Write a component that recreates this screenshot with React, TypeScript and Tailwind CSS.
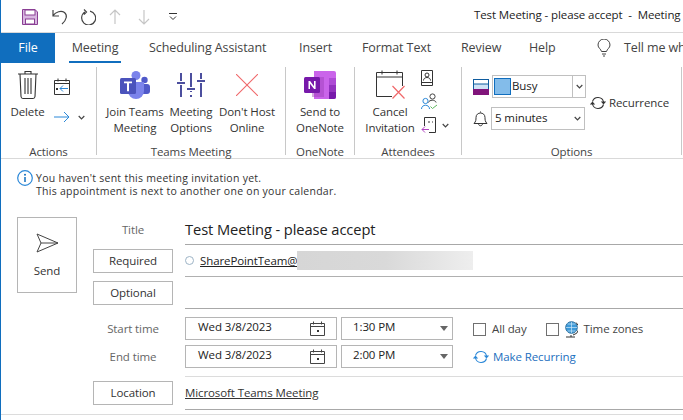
import React from "react";

const Chevron = ({ className = "" }: { className?: string }) => (
  <svg width="7" height="5" viewBox="0 0 7 5" className={className} fill="none" stroke="#444" strokeWidth="1.2"><path d="M.7 1l2.8 2.8L6.3 1" /></svg>
);

const Save = () => (
  <svg width="16" height="16" viewBox="0 0 16 16" fill="none">
    <path d="M.5.5h12.5l2.5 2.5v12.5H.5z" fill="#d8b6e0" stroke="#8a3f94" />
    <rect x="3" y="1" width="10" height="5" fill="#fff" stroke="#8a3f94" />
    <rect x="3.5" y="10" width="9" height="5" fill="#fff" stroke="#8a3f94" />
  </svg>
);

const Trash = () => (
  <svg width="22" height="30" viewBox="0 0 22 30" fill="none" stroke="#333" strokeWidth="1.1">
    <path d="M1 4h20M8 4V1.500h6V4M3 4l1 22.500q.2 2 2 2h10q1.800 0 2-2L19 4M8 8v16M11 8v16M14 8v16" />
  </svg>
);

const CalBack = () => (
  <svg width="16" height="17" viewBox="0 0 16 17" fill="none" stroke="#333">
    <path d="M.5 2.500h15v14H.5zM.5 5.500h15M4 .5v3M12 .5v3" />
    <path d="M14 10.500H6M9 7.500l-3 3 3 3" stroke="#2b88d8" />
    <rect x="2" y="10" width="2" height="2" fill="#333" stroke="none" />
  </svg>
);

const Teams = () => (
  <svg width="30" height="28" viewBox="0 0 30 28">
    <circle cx="24.500" cy="9" r="3.200" fill="#5059c9" />
    <rect x="20" y="13" width="10" height="10" rx="3" fill="#5059c9" />
    <circle cx="16" cy="4.500" r="4.500" fill="#7b83eb" />
    <path d="M8 11h16v9a8 8 0 0 1-16 0z" fill="#7b83eb" />
    <rect x="0" y="7" width="16" height="16" rx="1.500" fill="#4b53bc" />
    <path d="M4 10.500h8v1.800H9v8H7v-8H4z" fill="#fff" />
  </svg>
);

const Sliders = () => (
  <svg width="28" height="24" viewBox="0 0 28 24" fill="none" stroke="#4c4f9e" strokeWidth="2">
    <path d="M4 0v8M4 12v12M14 0v14M14 18v1M14 22v2M24 0v6M24 10v14" />
    <path d="M0 10h8M10 16h8M20 8h8" />
  </svg>
);

const RedX = ({ s = 22 }: { s?: number }) => (
  <svg width={s} height={s} viewBox="0 0 22 22" stroke="#f0686a" strokeWidth="1.100"><path d="M0 0l22 22M22 0L0 22" /></svg>
);

const OneNote = () => (
  <svg width="32" height="28" viewBox="0 0 32 28">
    <path d="M10 0h20a2 2 0 0 1 2 2v24a2 2 0 0 1-2 2H10z" fill="#ca64ea" />
    <rect x="25" y="7" width="7" height="7" fill="#ae4bd5" />
    <rect x="25" y="14" width="7" height="7" fill="#9332bf" />
    <path d="M25 21h7v5a2 2 0 0 1-2 2h-5z" fill="#7719aa" />
    <rect x="8" y="6" width="12" height="20" fill="#9b3cb9" opacity=".45" />
    <rect x="0" y="6" width="16" height="16" rx="1.500" fill="#7719aa" />
    <path d="M4.500 18V10h1.600l3.900 5.200V10h1.600v8h-1.500L6 12.700V18z" fill="#fff" />
  </svg>
);

const CancelInv = () => (
  <svg width="30" height="30" viewBox="0 0 30 30" fill="none">
    <path d="M17 26.500H1.500V2.500h26V16M1.500 7h26M7 .5v4M22 .5v4" stroke="#333" />
    <path d="M17.500 16l12 12.500M29.500 16l-12 12.500" stroke="#f0686a" strokeWidth="1.200" />
  </svg>
);

const Card = () => (
  <svg width="12" height="16" viewBox="0 0 12 16" fill="none" stroke="#333">
    <path d="M.5.5h11v15H.5zM.5 12.500h11" />
    <circle cx="6" cy="5" r="2" />
    <path d="M2.500 10.500c0-4 7-4 7 0" />
  </svg>
);

const People = () => (
  <svg width="17" height="17" viewBox="0 0 17 17" fill="none">
    <circle cx="11.500" cy="3.500" r="2.600" stroke="#444" />
    <path d="M7.500 9.500c.6-3 7-3 7.600 0" stroke="#444" />
    <circle cx="4.500" cy="8" r="2.600" stroke="#2b88d8" />
    <path d="M.5 16c0-5 8-5 8 0" stroke="#2b88d8" />
    <path d="M9.500 13.500l2 2 4.500-3.500" stroke="#5fb75f" />
  </svg>
);

const Forward = () => (
  <svg width="16" height="16" viewBox="0 0 16 16" fill="none">
    <path d="M3.500 9V.5h11v15H8" stroke="#333" />
    <path d="M7 5h2M11 5h1" stroke="#333" />
    <path d="M8 12.500H1M4 9.500l-3 3 3 3" stroke="#b146c2" />
  </svg>
);

const BusyIcon = () => (
  <svg width="16" height="16" viewBox="0 0 16 16" fill="none">
    <rect x=".5" y=".5" width="15" height="15" fill="#fff" stroke="#0f5c9e" />
    <rect x="1" y="5" width="14" height="5" fill="#cfe2f5" />
    <path d="M.5 5h15" stroke="#0f5c9e" />
    <rect x="0" y="10" width="16" height="6" fill="#80147a" />
  </svg>
);

const Bell = () => (
  <svg width="15" height="16" viewBox="0 0 15 16" fill="none" stroke="#333">
    <path d="M1 12.500h13c-2-2-2-4-2-6 0-6-9-6-9 0 0 2 0 4-2 6zM5.500 12.500c0 3 4 3 4 0" />
    <path d="M7.500 .5v1" />
  </svg>
);

const Recur = ({ c = "#333", w = 16 }: { c?: string; w?: number }) => (
  <svg width={w} height={w} viewBox="0 0 16 16" fill="none" stroke={c} strokeWidth="1.100">
    <path d="M2.500 6.500a5.700 5.700 0 0 1 11 .5M13.500 9.500a5.700 5.700 0 0 1-11-.5" />
    <path d="M10.800 6.500h5.400l-2.700 3zM-.2 9.500h5.400l-2.700-3z" fill={c} stroke="none" />
  </svg>
);

const CalSmall = () => (
  <svg width="15" height="15" viewBox="0 0 15 15" fill="none" stroke="#444">
    <path d="M.5 2.500h14v12H.5zM.5 5.500h14M3.500.5v3M11.500.5v3" />
    <rect x="7" y="9" width="2" height="2" fill="#333" stroke="none" />
  </svg>
);

const Globe = () => (
  <svg width="13" height="17" viewBox="0 0 13 17" fill="none">
    <circle cx="6.500" cy="6.500" r="5.800" fill="#3d9ad9" stroke="#2a6e9e" />
    <path d="M1 6.500h11M6.500 1v11M2.500 3h8M2.500 10h8" stroke="#cde6f7" strokeWidth=".7" />
    <path d="M11 1.500a7 7 0 0 1-3 12.500M1 16h9M6 14v2" stroke="#333" />
  </svg>
);

const Tab = ({ children, className = "" }: { children: React.ReactNode; className?: string }) => (
  <span className={`shrink-0 text-[12.5px] text-[#444] ${className}`}>{children}</span>
);

const BigBtn = ({ icon, l1, l2, w }: { icon: React.ReactNode; l1: string; l2?: string; w: string }) => (
  <div className={`flex flex-col items-center ${w}`}>
    <div className="h-[36px] flex items-center justify-center mb-[1px]">{icon}</div>
    <span className="h-[16px] leading-[16px] whitespace-nowrap">{l1}</span>
    {l2 && <span className="h-[16px] leading-[16px] whitespace-nowrap">{l2}</span>}
  </div>
);

const Group = ({ w, label, children }: { w: string; label: string; children: React.ReactNode }) => (
  <div className={`${w} shrink-0 h-[88px] flex flex-col border-r border-[#c8c8c8]`}>
    <div className="h-[78px] flex">{children}</div>
    <div className="text-center leading-[14px] h-[10px] whitespace-nowrap text-[#444]">{label}</div>
  </div>
);

const FormBtn = ({ children }: { children: React.ReactNode }) => (
  <div className="w-[80px] h-[24px] border border-[#b5b5b5] text-center leading-[21px] text-[#333]">{children}</div>
);

const Rule = ({ className = "" }: { className?: string }) => <div className={`h-px ${className}`} />;

const Check = () => <div className="w-[13px] h-[13px] border border-[#707070]" />;

const DateTime = ({ time }: { time: string }) => (
  <div className="flex gap-[4px]">
    <div className="w-[152px] h-[23px] border border-[#b5b5b5] flex items-center justify-between pl-[12px] pr-[11px] text-[#222]">
      <span className="-mt-[3px]">Wed 3/8/2023</span>
      <CalSmall />
    </div>
    <div className="w-[112px] h-[23px] border border-[#b5b5b5] flex items-center justify-between pl-[11px] pr-[3px] text-[#222]">
      <span className="-mt-[3px]">{time}</span>
      <span className="w-0 h-0 border-l-[4px] border-r-[4px] border-t-[5px] border-l-transparent border-r-transparent border-t-[#666] mr-[1px]" />
    </div>
  </div>
);

export default function App() {
  return (
    <div className="w-[683px] h-[420px] overflow-hidden bg-white border-l border-[#106ebe] text-[11.5px] text-[#333] font-['Open_Sans',sans-serif] tracking-[-0.1px]">
      {/* Quick access + title */}
      <div className="h-[33px] border-b border-[#d9d9d9] flex items-center">
        <div className="flex items-center ml-[21px] w-[440px] pt-[2px]">
          <Save />
          <svg className="ml-[14px]" width="16" height="16" viewBox="0 0 16 16" fill="none" stroke="#444" strokeWidth="1.200"><path d="M1 1v6h6M1 6.500C4 3 9 1 12.500 3.500c3 2.500 2.500 7-2.500 11.500" /></svg>
          <svg className="ml-[12px]" width="16" height="16" viewBox="0 0 16 16" fill="none" stroke="#444" strokeWidth="1.200"><path d="M5 3a7 7 0 1 0 5-.9M4 .5L6.500 3 4 5.500" /></svg>
          <svg className="ml-[13px]" width="12" height="16" viewBox="0 0 12 16" fill="none" stroke="#c6c6c6" strokeWidth="1.200"><path d="M6 15V1M1 6l5-5 5 5" /></svg>
          <svg className="ml-[17px]" width="12" height="16" viewBox="0 0 12 16" fill="none" stroke="#c6c6c6" strokeWidth="1.200"><path d="M6 1v14M1 10l5 5 5-5" /></svg>
          <svg className="ml-[19px]" width="8" height="8" viewBox="0 0 8 8" fill="none" stroke="#333"><path d="M0 .5h8M1 3.500l3 3 3-3" /></svg>
        </div>
        <span className="ml-[12px] whitespace-pre text-[#222] -translate-y-px">Test Meeting - please accept  -  Meeting</span>
      </div>
      {/* Tabs */}
      <div className="h-[30px] flex items-center whitespace-nowrap">
        <div className="w-[54px] h-[30px] shrink-0 bg-[#106ebe] text-white text-center text-[12.5px] leading-[29px]">File</div>
        <div className="ml-[14px] w-[52px] h-[30px] shrink-0 border-b-[2px] border-[#106ebe] text-center leading-[29px]">
          <Tab className="text-[#333]">Meeting</Tab>
        </div>
        <Tab className="ml-[28px] w-[150px]">Scheduling Assistant</Tab>
        <Tab className="w-[63px]">Insert</Tab>
        <Tab className="w-[99px]">Format Text</Tab>
        <Tab className="w-[68px]">Review</Tab>
        <Tab className="w-[68px]">Help</Tab>
        <svg className="shrink-0" width="14" height="18" viewBox="0 0 14 18" fill="none" stroke="#444"><path d="M4.500 12.500C4 10 1 9 1 6a6 6 0 0 1 12 0c0 3-3 4-3.500 6.500zM5 15h4M6 17h2" /></svg>
        <Tab className="ml-[13px]">Tell me what</Tab>
      </div>
      {/* Ribbon */}
      <div className="h-[96px] border-b border-[#d9d9d9] pt-[4px] flex">
        <Group w="w-[96px]" label="Actions">
          <div className="w-[53px] flex flex-col items-center">
            <div className="h-[36px] flex items-center mb-[1px] pl-[1px]"><Trash /></div>
            <span className="leading-[16px]">Delete</span>
          </div>
          <div className="flex flex-col pt-[11px]">
            <CalBack />
            <div className="flex items-center mt-[16px] gap-[8px]">
              <svg width="16" height="12" viewBox="0 0 16 12" fill="none" stroke="#2b88d8"><path d="M0 6h15M10 1l5 5-5 5" /></svg>
              <Chevron />
            </div>
          </div>
        </Group>
        <Group w="w-[189px]" label="Teams Meeting">
          <div className="flex pl-[7px]">
            <BigBtn w="w-[62px]" icon={<Teams />} l1="Join Teams" l2="Meeting" />
            <BigBtn w="w-[50px]" icon={<Sliders />} l1="Meeting" l2="Options" />
            <BigBtn w="w-[62px]" icon={<RedX />} l1="Don't Host" l2="Online" />
          </div>
        </Group>
        <Group w="w-[69px]" label="OneNote">
          <BigBtn w="w-[68px]" icon={<OneNote />} l1="Send to" l2="OneNote" />
        </Group>
        <Group w="w-[107px]" label="Attendees">
          <div className="pl-[5px] flex">
            <BigBtn w="w-[60px]" icon={<CancelInv />} l1="Cancel" l2="Invitation" />
            <div className="flex flex-col items-start pt-[3px] pl-[1px]">
              <Card />
              <div className="mt-[7px]"><People /></div>
              <div className="mt-[7px] flex items-center gap-[5px]"><Forward /><Chevron /></div>
            </div>
          </div>
        </Group>
        <Group w="w-[220px]" label="Options">
          <div className="flex pl-[11px] pt-[8px]">
            <div className="flex flex-col">
              <div className="flex items-center gap-[3px]">
                <BusyIcon />
                <div className="w-[94px] h-[23px] border border-[#c0c0c0] flex items-center text-[#222]">
                  <div className="w-[17px] h-[17px] bg-[#83bcea] border border-[#106ebe] ml-px mr-px" />
                  <span className="flex-1 -mt-[1px]">Busy</span>
                  <div className="w-[13px] h-full border-l border-[#c0c0c0] flex items-center justify-center"><Chevron /></div>
                </div>
              </div>
              <div className="flex items-center gap-[3px] mt-[9px]">
                <Bell />
                <div className="w-[94px] h-[23px] border border-[#c0c0c0] flex items-center justify-between pl-[3px] pr-[3px] text-[#222]">
                  <span className="-mt-[1px]">5 minutes</span>
                  <Chevron />
                </div>
              </div>
            </div>
            <div className="flex items-center gap-[3px] ml-[4px] h-[55px] whitespace-nowrap">
              <Recur />
              <span>Recurrence</span>
            </div>
          </div>
        </Group>
      </div>
      {/* Info */}
      <div className="h-[58px] flex items-start pl-[16px] pt-[11px] whitespace-nowrap text-[#333] text-[10.5px] leading-[13px] tracking-[0.27px]">
        <svg className="mr-[3px]" width="16" height="16" viewBox="0 0 16 16" fill="none"><circle cx="8" cy="8" r="7.300" stroke="#2b88d8" strokeWidth="1.200" /><path d="M8 7v5" stroke="#106ebe" strokeWidth="1.500" /><circle cx="8" cy="4.700" r="1" fill="#106ebe" /></svg>
        <div className="pt-[2px]">
          <div>You haven't sent this meeting invitation yet.</div>
          <div>This appointment is next to another one on your calendar.</div>
        </div>
      </div>
      {/* Form */}
      <div className="flex pl-[16px]">
        <div className="w-[60px] h-[76px] border border-[#b5b5b5] flex flex-col items-center pt-[15px] shrink-0">
          <svg width="23" height="20" viewBox="0 0 23 20" fill="none" stroke="#444"><path d="M1 1l21 9-21 9 4-9zM5 10h17" /></svg>
          <span className="mt-[9px]">Send</span>
        </div>
        <div className="ml-[16px] w-[80px] shrink-0 flex flex-col">
          <div className="h-[32px] text-center leading-[26px] text-[#666]">Title</div>
          <FormBtn>Required</FormBtn>
          <div className="h-[8px]" />
          <FormBtn>Optional</FormBtn>
          <div className="h-[12px]" />
          <div className="h-[28px] text-center leading-[23px] text-[#666]">Start time</div>
          <div className="h-[36px] text-center leading-[23px] text-[#666]">End time</div>
          <FormBtn>Location</FormBtn>
        </div>
        <div className="ml-[12px] flex-1 min-w-0 flex flex-col whitespace-nowrap">
          <div className="h-[27px] text-[14.700px] leading-[25px] text-[#222]">Test Meeting - please accept</div>
          <Rule className="bg-[#a8a8a8]" />
          <div className="h-[31px] flex items-center">
            <span className="w-[9px] h-[9px] rounded-full border border-[#9db4c6] bg-white" />
            <span className="ml-[6px] underline text-[#222]">SharePointTeam@</span>
            <span className="w-[176px] h-[19px] bg-gradient-to-r from-[#d6d6d6] via-[#d9d9d9] to-[#eeeeee]" />
          </div>
          <Rule className="bg-[#b0b0b0]" />
          <div className="h-[31px]" />
          <Rule className="bg-[#a8a8a8]" />
          <div className="pt-[8px] flex">
            <div className="flex flex-col gap-[5px]">
              <DateTime time="1:30 PM" />
              <DateTime time="2:00 PM" />
            </div>
            <div className="flex flex-col ml-[20px] text-[#444]">
              <div className="h-[24px] flex items-center">
                <Check /><span className="ml-[6px]">All day</span>
                <div className="w-[19px]" /><Check />
                <div className="ml-[6px]"><Globe /></div><span className="ml-[6px]">Time zones</span>
              </div>
              <div className="h-[30px] pt-[2px] flex items-center text-[#1d6fbe]">
                <Recur c="#2b88d8" w={16} /><span className="ml-[4px]">Make Recurring</span>
              </div>
            </div>
          </div>
          <Rule className="mt-[5px] bg-[#dcdcdc]" />
          <div className="h-[32px] flex items-center underline text-[#333]">Microsoft Teams Meeting</div>
          <Rule className="bg-[#a8a8a8]" />
        </div>
      </div>
      <Rule className="mt-[4px] bg-[#dcdcdc]" />
    </div>
  );
}
